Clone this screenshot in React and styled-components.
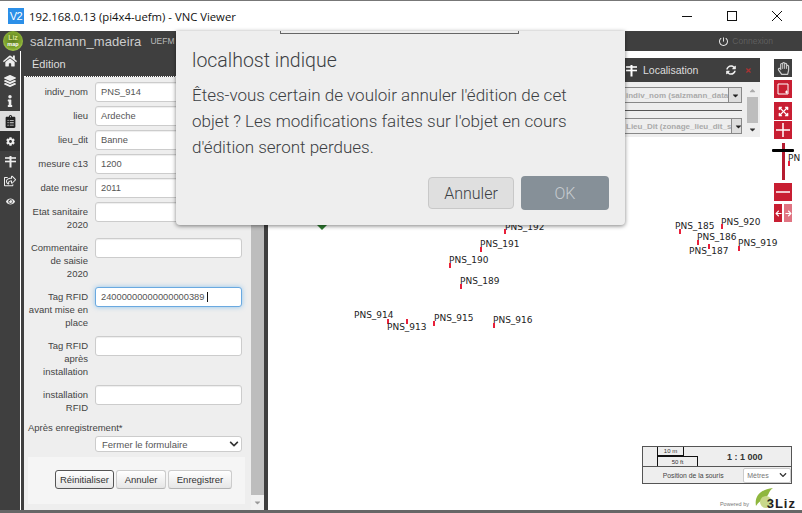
import styled, { createGlobalStyle } from "styled-components"
import { FaHome, FaLayerGroup, FaInfo, FaCog, FaEye, FaRegHandPaper, FaSyncAlt, FaTimes, FaChevronDown, FaCaretDown, FaCaretUp, FaExpandArrowsAlt, FaArrowLeft, FaArrowRight, FaRegShareSquare, FaClipboardList } from "react-icons/fa"
import { IoPower } from "react-icons/io5"

const GlobalStyle = createGlobalStyle`
    html, body { margin:0; padding:0; background:#fff; overflow:hidden; }
    * { box-sizing:border-box; }
`;

const Window = styled.div`
    position:relative;
    width:802px;
    height:513px;
    display:flex;
    flex-direction:column;
    overflow:hidden;
    background:#fff;
    font-family:"Liberation Sans", Arial, sans-serif;
    border-top:1px solid #777;
    border-bottom:3px solid #666;
`;

const TitleBar = styled.div`
    height:30px;
    flex:none;
    display:flex;
    align-items:center;
    padding-left:8px;
    background:#fff;
`;

const VncIcon = styled.div`
    width:16px;
    height:16px;
    background:#2b8fe8;
    color:#fff;
    font-size:11px;
    line-height:16px;
    text-align:center;
    letter-spacing:-0.5px;
    font-family:"Liberation Sans", sans-serif;
`;

const TitleText = styled.span`
    margin-left:5px;
    font-family:"Open Sans", sans-serif;
    font-size:11.3px;
    color:#111;
`;

const WindowButtons = styled.div`
    margin-left:auto;
    padding-right:3px;
    display:flex;
`;

const WindowButton = styled.div`
    width:45px;
    height:30px;
    display:flex;
    align-items:center;
    justify-content:center;
`;

const AppHeader = styled.div`
    height:20px;
    flex:none;
    display:flex;
    align-items:center;
    background:#3f3f3f;
    padding-left:3px;
    padding-right:29px;
`;

const LogoBadge = styled.svg`
    width:20px;
    height:20px;
    flex:none;
`;

const RepoName = styled.span`
    margin-left:7px;
    font-size:13px;
    color:#ccc;
    letter-spacing:0.1px;
`;

const RepoTag = styled.span`
    margin-left:9px;
    font-size:8.5px;
    color:#bbb;
`;

const Connexion = styled.div`
    margin-left:auto;
    display:flex;
    align-items:center;
    gap:3px;
    font-size:8.5px;
    color:#5e5e5e;
`;

const Body = styled.div`
    flex:1;
    display:flex;
    min-height:0;
`;

const Sidebar = styled.div`
    width:21px;
    flex:none;
    display:flex;
    flex-direction:column;
    background:#3f3f3f;
    border-right:1px solid #fff;
`;

const SideItem = styled.div`
    height:20px;
    display:flex;
    align-items:center;
    justify-content:center;
    color:${(props) => props.$active ? "#222" : "#eee"};
    background:${(props) => props.$active ? "#ddd" : props.$dark ? "#333" : "transparent"};
`;

const EditPanel = styled.div`
    width:247px;
    flex:none;
    display:flex;
    flex-direction:column;
    background:#3f3f3f;
    padding:0 4px 0 3px;
`;

const PanelTitle = styled.div`
    height:26px;
    flex:none;
    padding-left:8px;
    display:flex;
    align-items:center;
    color:#ddd;
    font-size:11px;
    border-bottom:1px dotted #fff;
`;

const PanelScroll = styled.div`
    flex:1;
    min-height:0;
    display:flex;
    background:#eee;
`;

const FormArea = styled.div`
    width:227px;
    flex:none;
    padding:5px 6px 0 4px;
`;

const FormRow = styled.div`
    display:flex;
    gap:7px;
    align-items:flex-start;
`;

const RowLabel = styled.div`
    width:60px;
    flex:none;
    padding:3px 0 7px;
    font-size:9.5px;
    line-height:13px;
    color:#444;
    text-align:right;
    white-space:pre-line;
`;

const TextBox = styled.div`
    width:147px;
    height:20px;
    margin-bottom:4px;
    flex:none;
    display:flex;
    align-items:center;
    padding-left:5px;
    background:#fff;
    border:1px solid ${(props) => props.$focus ? "#6aa9e0" : "#ccc"};
    border-radius:3px;
    box-shadow:${(props) => props.$focus ? "0 0 5px rgba(82,168,236,.6)" : "inset 0 1px 1px rgba(0,0,0,.07)"};
    font-size:9.3px;
    color:#555;
`;

const Caret = styled.span`
    display:inline-block;
    width:1px;
    height:10px;
    margin-left:3px;
    background:#111;
`;

const AfterSave = styled.div`
    height:15px;
    font-size:9.5px;
    line-height:13px;
    color:#444;
`;

const SelectBox = styled.div`
    width:147px;
    height:16px;
    margin-left:67px;
    display:flex;
    align-items:center;
    justify-content:space-between;
    padding:0 2px 0 6px;
    background:#fff;
    border:1px solid #ccc;
    border-radius:3px;
    font-size:9.5px;
    color:#555;
`;

const ButtonBar = styled.div`
    height:47px;
    width:217px;
    margin-top:5px;
    display:flex;
    justify-content:flex-end;
    gap:2px;
    padding:13px 13px 0 0;
    background:#f5f5f5;
`;

const FormButton = styled.div`
    height:19px;
    width:${(props) => props.$w}px;
    display:flex;
    align-items:center;
    justify-content:center;
    background:linear-gradient(#fff, #e6e6e6);
    border:1px solid ${(props) => props.$focus ? "#555" : "#ccc"};
    border-bottom-color:${(props) => props.$focus ? "#555" : "#b3b3b3"};
    border-radius:3px;
    font-size:9.5px;
    color:#333;
`;

const ScrollTrack = styled.div`
    width:13px;
    flex:none;
    display:flex;
    flex-direction:column;
    background:#f1f1f1;
`;

const ScrollThumb = styled.div`
    flex:1;
    background:#bdbdbd;
`;

const ScrollArrow = styled.div`
    height:15px;
    flex:none;
    display:flex;
    align-items:center;
    justify-content:center;
    font-size:9px;
    color:#999;
`;

const MapArea = styled.div`
    position:relative;
    flex:1;
    background:#fff;
    overflow:hidden;
`;

const MapPin = styled.div`
    position:absolute;
    left:${(props) => props.$x - 268}px;
    top:${(props) => props.$y - 51}px;
    width:1.5px;
    height:5px;
    background:#e8203a;
`;

const MapLabel = styled.div`
    position:absolute;
    left:${(props) => props.$x - 268}px;
    top:${(props) => props.$y - 6 - 51}px;
    font-family:"DejaVu Sans", sans-serif;
    font-size:9px;
    line-height:12px;
    color:#222;
    white-space:nowrap;
`;

const GreenMarker = styled.div`
    position:absolute;
    left:49px;
    top:174px;
    width:0;
    height:0;
    border-left:5px solid transparent;
    border-right:5px solid transparent;
    border-top:5px solid #2f7d32;
`;

const LocatePanel = styled.div`
    position:absolute;
    right:42px;
    top:7px;
    width:150px;
    height:79px;
    display:flex;
    flex-direction:column;
    background:#eee;
`;

const LocateHeader = styled.div`
    height:24px;
    flex:none;
    display:flex;
    align-items:center;
    gap:5px;
    padding:0 8px 0 15px;
    background:#3f3f3f;
    color:#ddd;
    font-size:10.5px;
`;

const LocateTitle = styled.span`
    flex:1;
`;

const LocateClose = styled.span`
    display:flex;
    margin-left:4px;
    color:#a33;
`;

const LocateBody = styled.div`
    flex:1;
    display:flex;
`;

const LocateFields = styled.div`
    width:132px;
    flex:none;
    padding-top:5px;
    display:flex;
    flex-direction:column;
    gap:7px;
`;

const LocateSelect = styled.div`
    height:16px;
    display:flex;
    align-items:center;
    justify-content:space-between;
    padding-left:16px;
    border:1px solid #888;
    border-left:none;
    font-size:8px;
    font-weight:bold;
    color:#aaa;
    white-space:nowrap;
    overflow:hidden;
`;

const LocateArrow = styled.div`
    width:14px;
    height:100%;
    flex:none;
    display:flex;
    align-items:center;
    justify-content:center;
    background:#ddd;
    border-left:1px solid #888;
    color:#222;
    font-size:9px;
`;

const LocateRule = styled.div`
    height:1px;
    background:#555;
`;

const LocateScroll = styled.div`
    width:14px;
    margin-left:3px;
    padding-top:4px;
    display:flex;
    flex-direction:column;
    align-items:center;
    color:#aaa;
    font-size:9px;
`;

const LocateThumb = styled.div`
    width:11px;
    height:26px;
    margin:2px 0;
    background:#bdbdbd;
`;

const MapControls = styled.div`
    position:absolute;
    left:506px;
    top:8px;
    width:18px;
    display:flex;
    flex-direction:column;
    align-items:center;
`;

const MapButton = styled.div`
    width:18px;
    height:18px;
    margin-bottom:${(props) => props.$gap ?? 3}px;
    display:flex;
    align-items:center;
    justify-content:center;
    background:${(props) => props.$dark ? "#3f3f3f" : "#c81e32"};
    color:#fff;
    font-size:11px;
`;

const ZoomSlider = styled.div`
    position:relative;
    width:3px;
    height:37px;
    margin:1px 0 3px;
    background:#b51c30;
`;

const ZoomThumb = styled.div`
    position:absolute;
    left:-10px;
    top:6px;
    width:22px;
    height:3px;
    background:#000;
    border-radius:1px;
`;

const HistoryPair = styled.div`
    display:flex;
    gap:2px;
`;

const HistoryButton = styled.div`
    width:8px;
    height:18px;
    display:flex;
    align-items:center;
    justify-content:center;
    background:${(props) => props.$off ? "#e07482" : "#c81e32"};
    color:#fff;
    font-size:7px;
`;

const ScaleBox = styled.div`
    position:absolute;
    left:374px;
    top:395px;
    width:150px;
    height:38px;
    display:flex;
    flex-direction:column;
    background:#eee;
    border:1px solid #555;
`;

const ScaleTop = styled.div`
    height:20px;
    flex:none;
    display:flex;
    align-items:center;
    border-bottom:1px solid #555;
    padding-left:14px;
`;

const ScaleRuler = styled.div`
    position:relative;
    width:42px;
    height:19px;
    font-size:6px;
    color:#333;
`;

const ScaleMetric = styled.div`
    position:absolute;
    left:0;
    top:0;
    width:27px;
    height:9px;
    border:solid #111;
    border-width:0 1px 1px 1px;
    text-align:center;
    line-height:8px;
`;

const ScaleImperial = styled.div`
    position:absolute;
    left:0;
    top:9px;
    width:41px;
    height:10px;
    border:solid #111;
    border-width:1px 1px 0 1px;
    text-align:center;
    line-height:10px;
`;

const ScaleValue = styled.div`
    margin-left:28px;
    font-size:9px;
    font-weight:bold;
    color:#333;
`;

const ScaleBottom = styled.div`
    flex:1;
    display:flex;
    align-items:center;
`;

const MousePos = styled.div`
    width:101px;
    text-align:center;
    font-size:6.8px;
    color:#444;
`;

const UnitSelect = styled.div`
    width:48px;
    height:15px;
    display:flex;
    align-items:center;
    justify-content:space-between;
    padding:0 3px;
    background:#fff;
    border:1px solid #ccc;
    border-radius:2px;
    font-size:7px;
    color:#777;
`;

const PoweredBy = styled.div`
    position:absolute;
    right:6px;
    bottom:0;
    display:flex;
    align-items:flex-end;
    gap:4px;
    font-size:5.5px;
    color:#777;
`;

const PoweredText = styled.span`
    padding-bottom:3px;
`;

const LizLogo = styled.div`
    position:relative;
    width:43px;
    height:24px;
`;

const LizWord = styled.span`
    position:absolute;
    right:0;
    bottom:0;
    font-size:13px;
    line-height:12px;
    font-weight:bold;
    letter-spacing:1px;
    color:#222;
`;

const StrayBox = styled.div`
    position:absolute;
    left:104px;
    top:0;
    width:239px;
    height:3px;
    border:solid #666;
    border-width:0 1px 1px 1px;
`;

const Dialog = styled.div`
    position:absolute;
    left:176px;
    top:30px;
    width:449px;
    height:194px;
    padding:18px 16px 0;
    background:#eee;
    border-radius:0 0 4px 4px;
    box-shadow:0 1px 4px rgba(0,0,0,.5);
    font-family:Roboto, sans-serif;
    font-weight:300;
    color:#3c4043;
`;

const DialogTitle = styled.div`
    font-size:19.5px;
    line-height:24px;
`;

const DialogText = styled.div`
    margin-top:9px;
    font-size:17px;
    line-height:26px;
    width:400px;
`;

const DialogActions = styled.div`
    position:absolute;
    right:16px;
    bottom:15px;
    display:flex;
    align-items:center;
    gap:7px;
`;

const DialogButton = styled.div`
    display:flex;
    align-items:center;
    justify-content:center;
    width:${(props) => props.$primary ? 88 : 86}px;
    height:${(props) => props.$primary ? 34 : 32}px;
    background:${(props) => props.$primary ? "#869098" : "#dfdfdf"};
    border:${(props) => props.$primary ? "none" : "1px solid #c8c8c8"};
    border-radius:4px;
    font-size:16px;
    color:${(props) => props.$primary ? "#c6ccd0" : "#3c4043"};
`;

const SignIcon = ({ color = "#eee", size = 13 }) => (
    <svg width={size} height={size} viewBox="0 0 13 13" fill="none" stroke={color}>
        <path d="M6.5 1V12.5" strokeWidth="2" />
        <path d="M1 3H12" strokeWidth="1.6" />
        <path d="M1 6.5H12" strokeWidth="1.6" />
    </svg>
)

const PlusIcon = () => (
    <svg width="14" height="14" viewBox="0 0 14 14" stroke="#fff" strokeWidth="1.5"><path d="M0 7H14M7 0V14" /></svg>
)

const MinusIcon = () => (
    <svg width="14" height="14" viewBox="0 0 14 14" stroke="#fff" strokeWidth="1.5"><path d="M0 7H14" /></svg>
)

const fields = [
    { label: "indiv_nom", value: "PNS_914" },
    { label: "lieu", value: "Ardeche" },
    { label: "lieu_dit", value: "Banne" },
    { label: "mesure c13", value: "1200" },
    { label: "date mesur", value: "2011" },
    { label: "Etat sanitaire\n2020" },
    { label: "Commentaire\nde saisie\n2020" },
    { label: "Tag RFID\navant mise en\nplace", value: "24000000000000000389", focus: true },
    { label: "Tag RFID\naprès\ninstallation" },
    { label: "installation\nRFID" },
]

// x,y = start and centre line of the text, px,py = top of the red tick (page coords)
const pins = [
    { name: "PNS_192", x: 505, y: 227, px: 504, py: 229 },
    { name: "PNS_191", x: 480, y: 244, px: 480, py: 247 },
    { name: "PNS_190", x: 449, y: 260, px: 449, py: 263 },
    { name: "PNS_189", x: 460, y: 281, px: 460, py: 284 },
    { name: "PNS_914", x: 354, y: 315, px: 387, py: 319 },
    { name: "PNS_913", x: 387, y: 327, px: 406, py: 319 },
    { name: "PNS_915", x: 434, y: 318, px: 433, py: 321 },
    { name: "PNS_916", x: 493, y: 320, px: 493, py: 323 },
    { name: "PNS_185", x: 675, y: 226, px: 679, py: 229 },
    { name: "PNS_920", x: 721, y: 222, px: 721, py: 224 },
    { name: "PNS_186", x: 697, y: 237, px: 697, py: 240 },
    { name: "PNS_187", x: 689, y: 251, px: 708, py: 244 },
    { name: "PNS_919", x: 738, y: 243, px: 738, py: 246 },
    { name: "PN", x: 788, y: 158, px: 788, py: 161 },
]

const App = () => {
    return (
        <Window>
            <GlobalStyle />
            <TitleBar>
                <VncIcon>V2</VncIcon>
                <TitleText>192.168.0.13 (pi4x4-uefm) - VNC Viewer</TitleText>
                <WindowButtons>
                    <WindowButton>
                        <svg width="10" height="10" viewBox="0 0 10 10"><path d="M0 5.5H10" stroke="#111" /></svg>
                    </WindowButton>
                    <WindowButton>
                        <svg width="10" height="10" viewBox="0 0 10 10"><rect x="0.5" y="0.5" width="9" height="9" fill="none" stroke="#111" /></svg>
                    </WindowButton>
                    <WindowButton>
                        <svg width="10" height="10" viewBox="0 0 10 10"><path d="M0 0L10 10M10 0L0 10" stroke="#111" /></svg>
                    </WindowButton>
                </WindowButtons>
            </TitleBar>
            <AppHeader>
                <LogoBadge viewBox="0 0 20 20">
                    <defs>
                        <radialGradient id="lizGlow" cx="50%" cy="45%" r="55%">
                            <stop offset="0%" stopColor="#5d7a22" />
                            <stop offset="75%" stopColor="#7fa62e" />
                            <stop offset="100%" stopColor="#a6c850" />
                        </radialGradient>
                    </defs>
                    <circle cx="10" cy="10" r="10" fill="url(#lizGlow)" />
                    <text x="10" y="9" textAnchor="middle" fontSize="7" fontWeight="bold" fill="#d4e48c" fontFamily="Liberation Sans">Liz</text>
                    <text x="10" y="15" textAnchor="middle" fontSize="5.5" fontWeight="bold" fill="#fff" fontFamily="Liberation Sans">map</text>
                </LogoBadge>
                <RepoName>salzmann_madeira</RepoName>
                <RepoTag>UEFM</RepoTag>
                <Connexion>
                    <IoPower size={11} color="#eee" />
                    Connexion
                </Connexion>
            </AppHeader>
            <Body>
                <Sidebar>
                    <SideItem><FaHome size={14} /></SideItem>
                    <SideItem><FaLayerGroup size={12} /></SideItem>
                    <SideItem><FaInfo size={12} /></SideItem>
                    <SideItem $active><FaClipboardList size={13} /></SideItem>
                    <SideItem $dark><FaCog size={9} /></SideItem>
                    <SideItem><SignIcon /></SideItem>
                    <SideItem><FaRegShareSquare size={12} /></SideItem>
                    <SideItem><FaEye size={9} /></SideItem>
                </Sidebar>
                <EditPanel>
                    <PanelTitle>Édition</PanelTitle>
                    <PanelScroll>
                        <FormArea>
                            {fields.map((field) => (
                                <FormRow key={field.label}>
                                    <RowLabel>{field.label}</RowLabel>
                                    <TextBox $focus={field.focus}>
                                        {field.value}
                                        {field.focus && <Caret />}
                                    </TextBox>
                                </FormRow>
                            ))}
                            <AfterSave>Après enregistrement*</AfterSave>
                            <SelectBox>
                                Fermer le formulaire
                                <FaChevronDown size={10} color="#333" />
                            </SelectBox>
                            <ButtonBar>
                                <FormButton $w={59} $focus>Réinitialiser</FormButton>
                                <FormButton $w={50}>Annuler</FormButton>
                                <FormButton $w={64}>Enregistrer</FormButton>
                            </ButtonBar>
                        </FormArea>
                        <ScrollTrack>
                            <ScrollThumb />
                            <ScrollArrow><FaCaretDown /></ScrollArrow>
                        </ScrollTrack>
                    </PanelScroll>
                </EditPanel>
                <MapArea>
                    <GreenMarker />
                    {pins.map((pin) => (
                        <div key={pin.name}>
                            <MapLabel $x={pin.x} $y={pin.y}>{pin.name}</MapLabel>
                            <MapPin $x={pin.px} $y={pin.py} />
                        </div>
                    ))}
                    <LocatePanel>
                        <LocateHeader>
                            <SignIcon color="#fff" />
                            <LocateTitle>Localisation</LocateTitle>
                            <FaSyncAlt size={10} color="#eee" />
                            <LocateClose><FaTimes size={7} /></LocateClose>
                        </LocateHeader>
                        <LocateBody>
                            <LocateFields>
                                <LocateSelect>
                                    indiv_nom (salzmann_data
                                    <LocateArrow><FaCaretDown /></LocateArrow>
                                </LocateSelect>
                                <LocateRule />
                                <LocateSelect>
                                    Lieu_Dit (zonage_lieu_dit_s
                                    <LocateArrow><FaCaretDown /></LocateArrow>
                                </LocateSelect>
                            </LocateFields>
                            <LocateScroll>
                                <FaCaretUp />
                                <LocateThumb />
                                <FaCaretDown color="#333" />
                            </LocateScroll>
                        </LocateBody>
                    </LocatePanel>
                    <MapControls>
                        <MapButton $dark><FaRegHandPaper size={13} color="#ccc" /></MapButton>
                        <MapButton $gap={4}>
                            <svg width="12" height="12" viewBox="0 0 12 12" fill="none" stroke="#fff"><path d="M1 1H11V11H1Z" /><path d="M8 9H11M9.5 7.5V10.5" /></svg>
                        </MapButton>
                        <MapButton $gap={1}><FaExpandArrowsAlt /></MapButton>
                        <MapButton $gap={3}><PlusIcon /></MapButton>
                        <ZoomSlider><ZoomThumb /></ZoomSlider>
                        <MapButton><MinusIcon /></MapButton>
                        <HistoryPair>
                            <HistoryButton><FaArrowLeft /></HistoryButton>
                            <HistoryButton $off><FaArrowRight /></HistoryButton>
                        </HistoryPair>
                    </MapControls>
                    <ScaleBox>
                        <ScaleTop>
                            <ScaleRuler>
                                <ScaleMetric>10 m</ScaleMetric>
                                <ScaleImperial>50 ft</ScaleImperial>
                            </ScaleRuler>
                            <ScaleValue>1 : 1 000</ScaleValue>
                        </ScaleTop>
                        <ScaleBottom>
                            <MousePos>Position de la souris</MousePos>
                            <UnitSelect>
                                Mètres
                                <FaChevronDown size={8} color="#333" />
                            </UnitSelect>
                        </ScaleBottom>
                    </ScaleBox>
                    <PoweredBy>
                        <PoweredText>Powered by</PoweredText>
                        <LizLogo>
                            <svg width="24" height="24" viewBox="0 0 24 24">
                                <path d="M3 20C1 10 8 3 20 2C15 5 17 9 12 12C9 14 6 15 3 20Z" fill="#8fb73e" />
                                <circle cx="13" cy="16" r="6" fill="#c8d88a" />
                            </svg>
                            <LizWord>3Liz</LizWord>
                        </LizLogo>
                    </PoweredBy>
                </MapArea>
            </Body>
            <Dialog>
                <StrayBox />
                <DialogTitle>localhost indique</DialogTitle>
                <DialogText>Êtes-vous certain de vouloir annuler l'édition de cet objet ? Les modifications faites sur l'objet en cours d'édition seront perdues.</DialogText>
                <DialogActions>
                    <DialogButton>Annuler</DialogButton>
                    <DialogButton $primary>OK</DialogButton>
                </DialogActions>
            </Dialog>
        </Window>
    )
}

export default App
